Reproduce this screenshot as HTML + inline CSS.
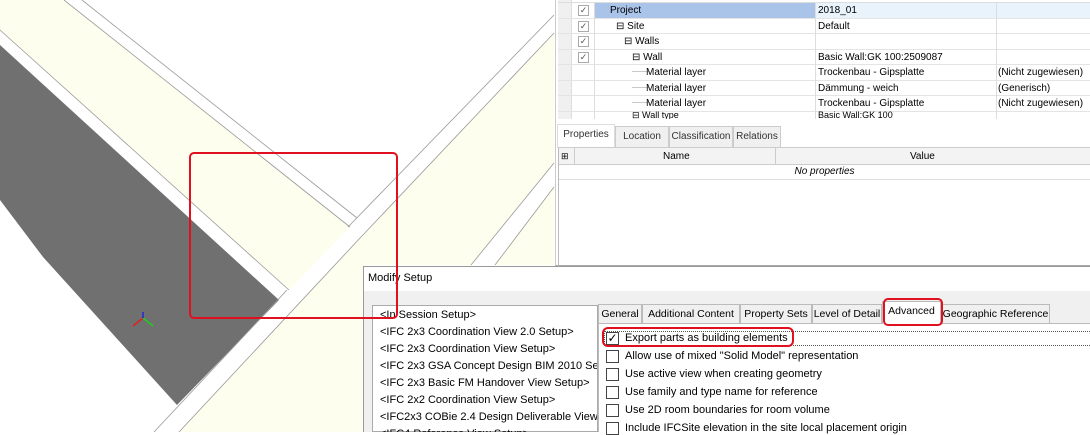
<!DOCTYPE html>
<html><head><meta charset="utf-8"><style>
*{margin:0;padding:0;box-sizing:border-box}
body{width:1090px;height:432px;overflow:hidden;position:relative;background:#fff;font-family:"Liberation Sans",sans-serif;font-size:10px;color:#000}
.a{position:absolute}
.row{position:absolute;left:558px;width:532px;height:15.5px;border-bottom:1px solid #e4e4e4}
.row div{position:absolute;top:0;height:15px;line-height:15px;white-space:nowrap;overflow:hidden}
.row div.cb{width:11px;height:11px;border:1px solid #aaa;background:#fff;top:2px;left:20px;font-size:9px;line-height:9px;text-align:center;color:#555}
.tab{position:absolute;top:126px;height:21px;border:1px solid #ccc;border-bottom:none;background:#f0f0f0;line-height:20px;text-align:center;font-size:10px;color:#333;white-space:nowrap}
.dtab{position:absolute;top:304px;height:20px;border:1px solid #bbb;background:#f0f0f0;line-height:19px;text-align:center;font-size:10.5px;white-space:nowrap;overflow:hidden}
.li{position:absolute;left:380px;font-size:11px;white-space:nowrap}
.chk{position:absolute;left:606px;width:13px;height:13px;border:1px solid #444;background:#fff}
.ct{position:absolute;left:625px;font-size:11px;white-space:nowrap}
</style></head><body>
<svg class="a" style="left:0;top:0" width="1090" height="432">
<polygon points="0,0 64,0 350,227 289,290 0,30" fill="#fefeee"/>
<polygon points="64,0 82,0 357,218 350,227" fill="#fff"/>
<line x1="64" y1="0" x2="350" y2="227" stroke="#999" stroke-width="0.8"/>
<line x1="82" y1="0" x2="357" y2="218" stroke="#999" stroke-width="0.8"/>
<line x1="0" y1="30" x2="289" y2="290" stroke="#999" stroke-width="0.8"/>
<polygon points="0,45 279,300 177,405 43,257 0,200" fill="#707070"/>
<polygon points="361,237 554,33 554,163 471,265 363,265 363,432 179,432 302,300" fill="#fefeee"/>
<line x1="348" y1="227" x2="554" y2="15" stroke="#999" stroke-width="0.8"/>
<line x1="361" y1="237" x2="554" y2="33" stroke="#999" stroke-width="0.8"/>
<line x1="361" y1="237" x2="179" y2="432" stroke="#999" stroke-width="0.8"/>
<line x1="287" y1="290" x2="154" y2="432" stroke="#999" stroke-width="0.8"/>
<line x1="554" y1="163" x2="471" y2="265" stroke="#999" stroke-width="0.8"/>
<polygon points="554,187 495,265 554,265" fill="#fefeee"/>
<line x1="554" y1="187" x2="495" y2="265" stroke="#999" stroke-width="0.8"/>
<line x1="143" y1="318" x2="133" y2="326" stroke="#d22" stroke-width="1.5"/>
<line x1="143" y1="318" x2="153" y2="326" stroke="#2c2" stroke-width="1.5"/>
<line x1="143" y1="318" x2="143" y2="312" stroke="#22d" stroke-width="1.5"/>
</svg>

<div class="a" style="left:555px;top:0;width:535px;height:266px;background:#fff;border-left:1px solid #ccc;border-bottom:1px solid #aaa"></div>
<div class="a" style="left:558px;top:0;width:14px;height:120px;background:#f0f0f0;border-right:1px solid #ddd"></div>
<div class="a" style="left:558px;top:0;width:532px;height:3px;border-bottom:1px solid #ddd"></div>
<div class="row" style="top:3px"><div class="cb">✓</div><div style="left:36px;width:221px;background:#a9c4e8;padding-left:16px">Project</div><div style="left:257px;width:275px;background:#e8f3fc;padding-left:3px">2018_01</div></div>
<div class="row" style="top:18.5px"><div class="cb">✓</div><div style="left:58px">⊟ Site</div><div style="left:260px">Default</div></div>
<div class="row" style="top:34px"><div class="cb">✓</div><div style="left:66px">⊟ Walls</div></div>
<div class="row" style="top:49.5px"><div class="cb">✓</div><div style="left:74px">⊟ Wall</div><div style="left:260px">Basic Wall:GK 100:2509087</div></div>
<div class="row" style="top:65px"><div style="left:74px;color:#aaa">┄┄┄</div><div style="left:88px">Material layer</div><div style="left:260px">Trockenbau - Gipsplatte</div><div style="left:440px">(Nicht zugewiesen)</div></div>
<div class="row" style="top:80.5px"><div style="left:74px;color:#aaa">┄┄┄</div><div style="left:88px">Material layer</div><div style="left:260px">Dämmung - weich</div><div style="left:440px">(Generisch)</div></div>
<div class="row" style="top:96px"><div style="left:74px;color:#aaa">┄┄┄</div><div style="left:88px">Material layer</div><div style="left:260px">Trockenbau - Gipsplatte</div><div style="left:440px">(Nicht zugewiesen)</div></div>
<div class="row" style="top:111.5px;height:7px;border:none"><div style="left:74px;top:-4px;font-size:9px">⊟ Wall type</div><div style="left:260px;top:-4px;font-size:9px">Basic Wall:GK 100</div></div>
<div class="a" style="left:594px;top:3px;width:1px;height:116px;background:#ddd"></div>
<div class="a" style="left:815px;top:3px;width:1px;height:116px;background:#ddd"></div>
<div class="a" style="left:996px;top:3px;width:1px;height:116px;background:#ddd"></div>
<div class="a" style="left:556px;top:119px;width:534px;height:28px;background:#fff"></div>
<div class="tab" style="left:557px;width:58px;background:#fff;top:124px;height:24px;border-color:#ddd">Properties</div>
<div class="tab" style="left:615px;width:54px">Location</div>
<div class="tab" style="left:669px;width:64px">Classification</div>
<div class="tab" style="left:733px;width:48px">Relations</div>
<div class="a" style="left:558px;top:147px;width:532px;height:1px;background:#ccc"></div>
<div class="a" style="left:559px;top:148px;width:531px;height:17px;background:#f3f3f3;border-bottom:1px solid #ccc"></div>
<div class="a" style="left:561px;top:151px;font-size:9px">⊞</div>
<div class="a" style="left:574px;top:148px;width:1px;height:17px;background:#ccc"></div>
<div class="a" style="left:775px;top:148px;width:1px;height:17px;background:#ccc"></div>
<div class="a" style="left:663px;top:151px">Name</div>
<div class="a" style="left:910px;top:151px">Value</div>
<div class="a" style="left:559px;top:165px;width:531px;height:15px;border-bottom:1px solid #ddd;text-align:center;font-style:italic;line-height:14px">No properties</div>
<div class="a" style="left:558px;top:148px;width:1px;height:118px;background:#bbb"></div>

<div class="a" style="left:363px;top:266px;width:727px;height:166px;background:#f0f0f0;border-left:1px solid #999;border-top:1px solid #999"></div>
<div class="a" style="left:364px;top:267px;width:726px;height:24px;background:#fff"></div>
<div class="a" style="left:368px;top:272px;font-size:11px">Modify Setup</div>
<div class="a" style="left:372px;top:305px;width:226px;height:127px;background:#fff;border:1px solid #aaa"></div>
<div class="a" style="left:373px;top:306px;width:224px;height:126px;overflow:hidden">
<div class="li" style="left:7px;top:3px">&lt;In Session Setup&gt;</div>
<div class="li" style="left:7px;top:20px">&lt;IFC 2x3 Coordination View 2.0 Setup&gt;</div>
<div class="li" style="left:7px;top:37px">&lt;IFC 2x3 Coordination View Setup&gt;</div>
<div class="li" style="left:7px;top:54px">&lt;IFC 2x3 GSA Concept Design BIM 2010 Setup</div>
<div class="li" style="left:7px;top:71px">&lt;IFC 2x3 Basic FM Handover View Setup&gt;</div>
<div class="li" style="left:7px;top:88px">&lt;IFC 2x2 Coordination View Setup&gt;</div>
<div class="li" style="left:7px;top:105px">&lt;IFC2x3 COBie 2.4 Design Deliverable View Se</div>
<div class="li" style="left:7px;top:122px">&lt;IFC4 Reference View Setup&gt;</div>
</div>
<div class="a" style="left:598px;top:323px;width:492px;height:109px;background:#fff;border-top:1px solid #bbb;border-left:1px solid #bbb"></div>
<div class="dtab" style="left:598px;width:44px">General</div>
<div class="dtab" style="left:642px;width:98px">Additional Content</div>
<div class="dtab" style="left:740px;width:72px">Property Sets</div>
<div class="dtab" style="left:812px;width:70px">Level of Detail</div>
<div class="dtab" style="left:882px;width:59px;top:301px;height:23px;background:#fff;border-bottom:none">Advanced</div>
<div class="dtab" style="left:941px;width:109px">Geographic Reference</div>
<div class="a" style="left:604px;top:331px;width:486px;height:15px;border:1px dotted #555;border-right:none"></div>
<div class="chk" style="top:332px;font-size:12px;line-height:11px;text-align:center">✓</div><div class="ct" style="top:332px">Export parts as building elements</div>
<div class="chk" style="top:350px"></div><div class="ct" style="top:350px">Allow use of mixed "Solid Model" representation</div>
<div class="chk" style="top:368px"></div><div class="ct" style="top:368px">Use active view when creating geometry</div>
<div class="chk" style="top:386px"></div><div class="ct" style="top:386px">Use family and type name for reference</div>
<div class="chk" style="top:404px"></div><div class="ct" style="top:404px">Use 2D room boundaries for room volume</div>
<div class="chk" style="top:422px"></div><div class="ct" style="top:422px">Include IFCSite elevation in the site local placement origin</div>

<div class="a" style="left:189px;top:152px;width:209px;height:167px;border:2px solid #e01020;border-radius:5px"></div>
<div class="a" style="left:883px;top:298px;width:60px;height:28px;border:2px solid #e01020;border-radius:5px"></div>
<div class="a" style="left:602px;top:327px;width:192px;height:20px;border:2px solid #e01020;border-radius:6px"></div>
</body></html>
